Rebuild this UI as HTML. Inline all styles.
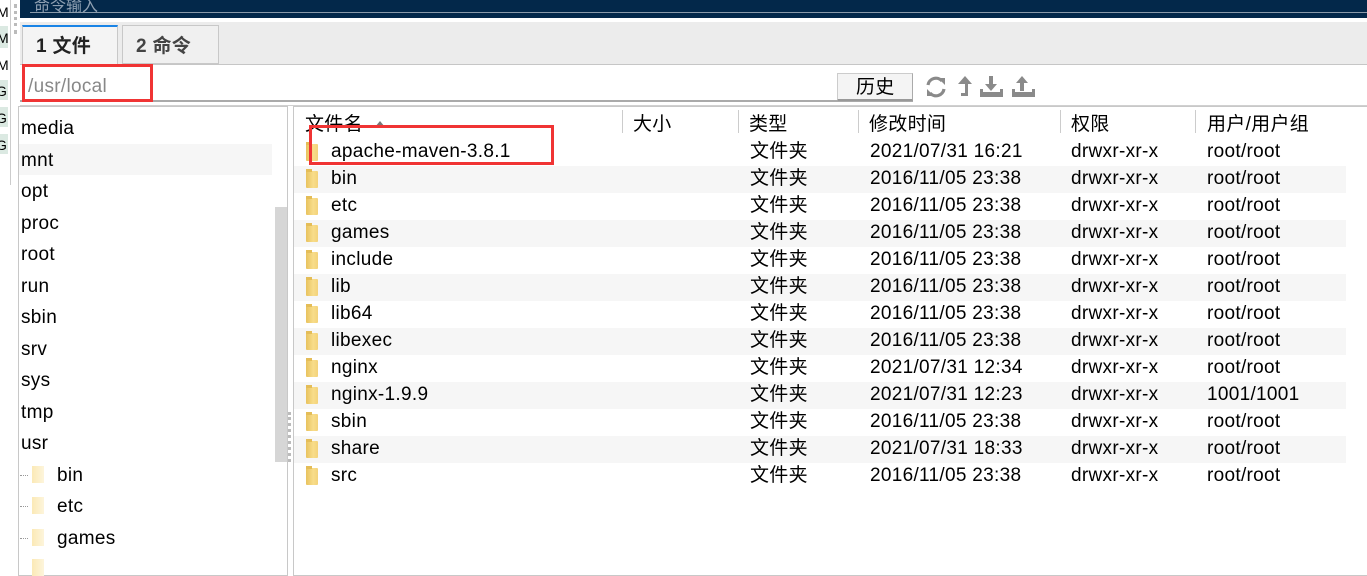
<!DOCTYPE html>
<html><head><meta charset="utf-8"><style>
*{margin:0;padding:0;box-sizing:border-box}
body{width:1367px;height:564px;overflow:hidden;background:#fff;position:relative;font-family:"Liberation Sans","Noto Sans CJK SC",sans-serif;color:#000}
.a{position:absolute}
.t{font-size:19px;line-height:22px;white-space:nowrap;letter-spacing:.3px}
.fold{position:absolute;width:12px;height:17px;background:linear-gradient(90deg,#e8c25e,#f8dd8a 60%,#f3d27a);border-radius:1px}
.fold:before{content:"";position:absolute;left:0;top:-2px;width:6px;height:3px;background:#e4bd58}
.lf{position:absolute;width:12px;height:17px;background:linear-gradient(90deg,#fbe9b6,#fdf5dc)}
.s{font-size:14px;line-height:16px}
</style></head><body>
<!-- left strip -->
<div class="a" style="left:0;top:0;width:12px;height:180px;background:#fff;overflow:hidden">
<div class="a s" style="left:-3px;top:4px">M</div>
<div class="a" style="left:0;top:26px;width:8px;height:22px;background:#dbe9e2"></div>
<div class="a s" style="left:-3px;top:30px">M</div>
<div class="a s" style="left:-3px;top:57px">M</div>
<div class="a" style="left:0;top:80px;width:8px;height:20px;background:#dbe9e2"></div>
<div class="a s" style="left:-4px;top:83px">G</div>
<div class="a" style="left:0;top:107px;width:8px;height:20px;background:#dbe9e2"></div>
<div class="a s" style="left:-4px;top:110px">G</div>
<div class="a" style="left:0;top:134px;width:8px;height:20px;background:#dbe9e2"></div>
<div class="a s" style="left:-4px;top:137px">G</div>
</div>
<div class="a" style="left:10px;top:0;width:1px;height:185px;background:#ccc"></div>
<div class="a" style="left:14px;top:4px;width:3px;height:30px;border-left:3px dotted #bbb"></div>
<!-- top dark bar -->
<div class="a" style="left:20px;top:0;width:1347px;height:18px;background:#03284a"></div>
<div class="a" style="left:30px;top:12px;width:1337px;height:1px;background:#8a9aaa"></div>
<div class="a" style="left:34px;top:-8px;color:#8fa0b2;font-size:16px">命令输入</div>
<!-- tab bar -->
<div class="a" style="left:20px;top:22px;width:1347px;height:43px;background:#ececec;border-bottom:1px solid #c6c6c6"></div>
<div class="a" style="left:22px;top:25px;width:96px;height:40px;background:#f4f4f4;border:1px solid #c8c8c8;border-top:2px solid #1a84e6;border-bottom:none"></div>
<div class="a t" style="left:36px;top:36px;font-weight:bold;color:#222">1 文件</div>
<div class="a" style="left:122px;top:25px;width:97px;height:39px;background:#f0f0f0;border:1px solid #c8c8c8"></div>
<div class="a t" style="left:136px;top:36px;font-weight:bold;color:#444">2 命令</div>
<!-- path row -->
<div class="a" style="left:20px;top:100px;width:893px;height:2px;background:#aaa"></div>
<div class="a" style="left:20px;top:105px;width:1347px;height:1px;background:#d0d0d0"></div>
<div class="a t" style="left:28px;top:76px;color:#888">/usr/local</div>
<div class="a" style="left:22px;top:64px;width:131px;height:38px;border:3px solid #f03434"></div>
<div class="a" style="left:837px;top:73px;width:76px;height:28px;background:#f4f4f4;border:1px solid #ccc;border-right-color:#aaa;border-bottom:2px solid #999"></div>
<div class="a t" style="left:856px;top:77px">历史</div>
<svg class="a" style="left:924px;top:74px" width="115" height="26" viewBox="0 0 115 26">
<g fill="none" stroke="#8a8a8a" stroke-width="3.2"><path d="M4 11 A8 8 0 0 1 18 7"/><path d="M20 15 A8 8 0 0 1 6 19"/></g>
<path d="M14 4 L21 4 L21 11 Z" fill="#8a8a8a"/><path d="M10 22 L3 22 L3 15 Z" fill="#8a8a8a"/>
<path d="M40 2 L47 10 L43 10 L43 22 L36 22 L36 19 L40 19 L40 10 L33 10 Z" fill="#8a8a8a" transform="translate(1,0)"/>
<path d="M65 2 h4 v8 h4 l-6 7 l-6 -7 h4z" fill="#8a8a8a"/><path d="M56 15 h3 v3 h17 v-3 h3 v8 h-23z" fill="#8a8a8a"/>
<path d="M98 2 l6 7 h-4 v8 h-4 v-8 h-4z" fill="#8a8a8a"/><path d="M88 15 h3 v3 h17 v-3 h3 v8 h-23z" fill="#8a8a8a"/>
</svg>
<!-- left panel -->
<div class="a" style="left:18px;top:106px;width:270px;height:470px;border:1px solid #c8c8c8"></div>
<div class="a" style="left:19px;top:144px;width:253px;height:31px;background:#f6f6f6"></div>
<div class="a" style="left:275px;top:207px;width:12px;height:255px;background:#d6d6d6"></div>
<div class="a" style="left:288px;top:412px;width:3px;height:50px;border-left:3px dotted #bbb"></div>
<div class="a t" style="left:21px;top:118px">media</div>
<div class="a t" style="left:21px;top:150px">mnt</div>
<div class="a t" style="left:21px;top:181px">opt</div>
<div class="a t" style="left:21px;top:213px">proc</div>
<div class="a t" style="left:21px;top:244px">root</div>
<div class="a t" style="left:21px;top:276px">run</div>
<div class="a t" style="left:21px;top:307px">sbin</div>
<div class="a t" style="left:21px;top:339px">srv</div>
<div class="a t" style="left:21px;top:370px">sys</div>
<div class="a t" style="left:21px;top:402px">tmp</div>
<div class="a t" style="left:21px;top:433px">usr</div>
<div class="a" style="left:20px;top:475px;width:8px;border-top:1px dotted #999"></div>
<div class="lf" style="left:32px;top:466px"></div><div class="a t" style="left:57px;top:465px">bin</div>
<div class="a" style="left:20px;top:506px;width:8px;border-top:1px dotted #999"></div>
<div class="lf" style="left:32px;top:497px"></div><div class="a t" style="left:57px;top:496px">etc</div>
<div class="a" style="left:20px;top:538px;width:8px;border-top:1px dotted #999"></div>
<div class="lf" style="left:32px;top:529px"></div><div class="a t" style="left:57px;top:528px">games</div>
<div class="lf" style="left:32px;top:559px"></div>
<!-- right panel -->
<div class="a" style="left:293px;top:106px;width:1080px;height:470px;border:1px solid #c8c8c8"></div>
<div class="a t" style="left:305px;top:114px">文件名</div>
<div class="a" style="left:375px;top:116px;width:0;height:0;border:5px solid transparent;border-bottom:6px solid #777"></div>
<div class="a" style="left:622px;top:110px;width:1px;height:23px;background:#ccc"></div>
<div class="a t" style="left:633px;top:114px">大小</div>
<div class="a" style="left:738px;top:110px;width:1px;height:23px;background:#ccc"></div>
<div class="a t" style="left:749px;top:114px">类型</div>
<div class="a" style="left:858px;top:110px;width:1px;height:23px;background:#ccc"></div>
<div class="a t" style="left:869px;top:114px">修改时间</div>
<div class="a" style="left:1060px;top:110px;width:1px;height:23px;background:#ccc"></div>
<div class="a t" style="left:1071px;top:114px">权限</div>
<div class="a" style="left:1195px;top:110px;width:1px;height:23px;background:#ccc"></div>
<div class="a t" style="left:1207px;top:114px">用户/用户组</div>
<div id="rows"></div>
<div class="a" style="left:309px;top:125px;width:245px;height:40px;border:3px solid #f03434"></div>
<script>
var d=[["apache-maven-3.8.1","2021/07/31 16:21","root/root"],["bin","2016/11/05 23:38","root/root"],["etc","2016/11/05 23:38","root/root"],["games","2016/11/05 23:38","root/root"],["include","2016/11/05 23:38","root/root"],["lib","2016/11/05 23:38","root/root"],["lib64","2016/11/05 23:38","root/root"],["libexec","2016/11/05 23:38","root/root"],["nginx","2021/07/31 12:34","root/root"],["nginx-1.9.9","2021/07/31 12:23","1001/1001"],["sbin","2016/11/05 23:38","root/root"],["share","2021/07/31 18:33","root/root"],["src","2016/11/05 23:38","root/root"]];
var h="";d.forEach(function(r,i){var y=139+i*27;
if(i%2==1)h+='<div class="a" style="left:294px;top:'+y+'px;width:1052px;height:27px;background:#f6f6f6"></div>';
h+='<div class="fold" style="left:306px;top:'+(y+5)+'px"></div>';
h+='<div class="a t" style="left:331px;top:'+(y+2)+'px">'+r[0]+'</div>';
h+='<div class="a t" style="left:750px;top:'+(y+2)+'px">文件夹</div>';
h+='<div class="a t" style="left:870px;top:'+(y+2)+'px">'+r[1]+'</div>';
h+='<div class="a t" style="left:1071px;top:'+(y+2)+'px">drwxr-xr-x</div>';
h+='<div class="a t" style="left:1207px;top:'+(y+2)+'px">'+r[2]+'</div>';});
document.getElementById("rows").innerHTML=h;
</script>
</body></html>
